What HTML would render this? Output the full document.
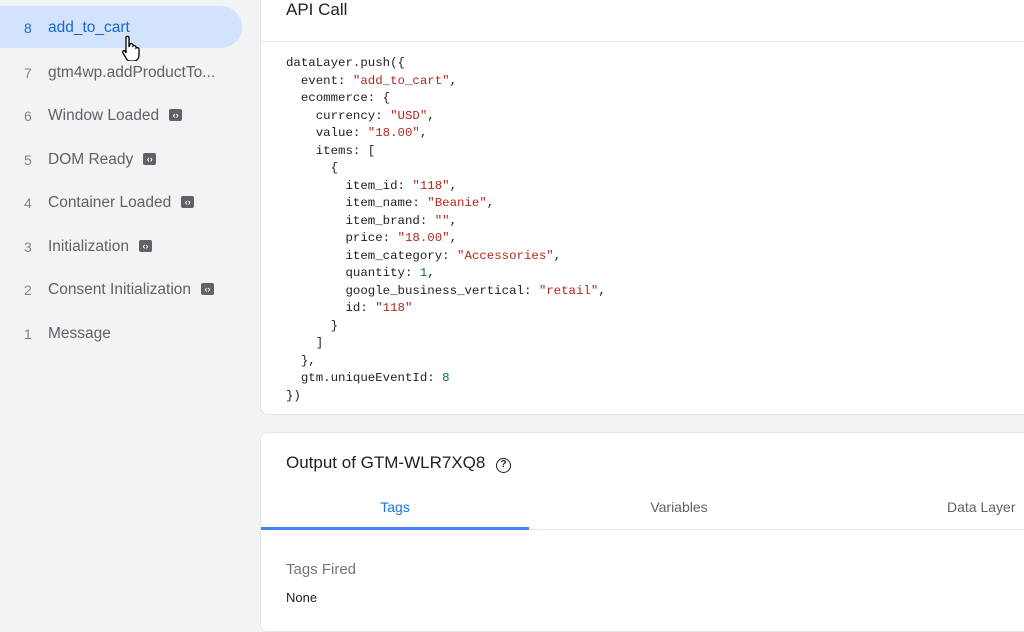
<!DOCTYPE html>
<html><head><meta charset="utf-8"><style>
*{margin:0;padding:0;box-sizing:border-box}
body{width:1024px;height:598px;overflow:hidden;background:#f1f3f4;font-family:"Liberation Sans",sans-serif;position:relative}
.side{position:absolute;left:0;top:0;width:258px;height:598px;background:#f1f3f4}
.item{position:absolute;left:0;height:42px;width:242px;font-size:15.5px;color:#5f6368;line-height:44px}
.item .n{position:absolute;left:24px;color:#80868b;font-size:14px}
.item .t{position:absolute;left:48px;white-space:nowrap}
.sel{background:#d3e3fd;border-radius:0 21px 21px 0}
.sel .n,.sel .t{color:#1967d2}
.b{display:inline-block;width:13px;height:12px;background:#5f6368;border-radius:2px;color:#fff;font-size:9px;line-height:12px;text-align:center;vertical-align:middle;margin-left:10px;position:relative;top:-1px;font-weight:bold}
.card{position:absolute;left:260px;width:780px;background:#fff;border-radius:8px;border:1px solid #e3e5e8}
.code{position:absolute;left:286px;top:55px;font-family:"Liberation Mono",monospace;font-size:12.4px;line-height:17.5px;color:#202124;white-space:pre}
.s{color:#b3261e}.num{color:#0b6e4f}
</style></head><body>
<div class="side">
<div class="item sel" style="top:6px"><span class="n">8</span><span class="t">add_to_cart</span></div>
<div class="item" style="top:51px"><span class="n">7</span><span class="t">gtm4wp.addProductTo...</span></div>
<div class="item" style="top:94px"><span class="n">6</span><span class="t">Window Loaded<span class="b">‹›</span></span></div>
<div class="item" style="top:138px"><span class="n">5</span><span class="t">DOM Ready<span class="b">‹›</span></span></div>
<div class="item" style="top:181px"><span class="n">4</span><span class="t">Container Loaded<span class="b">‹›</span></span></div>
<div class="item" style="top:225px"><span class="n">3</span><span class="t">Initialization<span class="b">‹›</span></span></div>
<div class="item" style="top:268px"><span class="n">2</span><span class="t">Consent Initialization<span class="b">‹›</span></span></div>
<div class="item" style="top:312px"><span class="n">1</span><span class="t">Message</span></div>
<svg style="position:absolute;left:121px;top:35px" width="20" height="26" viewBox="0 0 20 26"><path d="M5 2c1-1 3-1 3 1v9l1-3c1-1 3 0 3 1v1c1-1 3 0 3 1v1c1-1 3 0 3 1v6c0 3-2 6-5 6h-4c-2 0-3-1-4-3l-3-5c-1-1 0-3 2-2l1 2V3z" fill="#fff" stroke="#000" stroke-width="1.3"/></svg>
</div>
<div class="card" style="top:-10px;height:425px">
<div style="position:absolute;left:0;right:0;top:50px;border-top:1px solid #e3e5e8"></div>
<div style="position:absolute;left:25px;top:9px;font-size:17px;color:#202124">API Call</div>
</div>
<div class="code">dataLayer.push({
  event: <span class="s">"add_to_cart"</span>,
  ecommerce: {
    currency: <span class="s">"USD"</span>,
    value: <span class="s">"18.00"</span>,
    items: [
      {
        item_id: <span class="s">"118"</span>,
        item_name: <span class="s">"Beanie"</span>,
        item_brand: <span class="s">""</span>,
        price: <span class="s">"18.00"</span>,
        item_category: <span class="s">"Accessories"</span>,
        quantity: <span class="num">1</span>,
        google_business_vertical: <span class="s">"retail"</span>,
        id: <span class="s">"118"</span>
      }
    ]
  },
  gtm.uniqueEventId: <span class="num">8</span>
})</div>
<div class="card" style="top:432px;height:200px">
<div style="position:absolute;left:25px;top:20px;font-size:17px;color:#202124">Output of GTM-WLR7XQ8 <span style="display:inline-block;width:15px;height:15px;border:1.6px solid #202124;border-radius:50%;font-size:10px;text-align:center;line-height:12px;font-weight:bold;vertical-align:1px;margin-left:6px">?</span></div>
<div style="position:absolute;left:0;top:66px;width:268px;text-align:center;font-size:14px;color:#1a73e8">Tags</div>
<div style="position:absolute;left:268px;top:66px;width:300px;text-align:center;font-size:14px;color:#5f6368">Variables</div>
<div style="position:absolute;left:686px;top:66px;font-size:14px;color:#5f6368">Data Layer</div>
<div style="position:absolute;left:0;right:0;top:96px;border-top:1px solid #e3e5e8"></div>
<div style="position:absolute;left:0;top:94px;width:268px;height:3px;background:#4285f4"></div>
<div style="position:absolute;left:25px;top:128px;font-size:15px;color:#70757a">Tags Fired</div>
<div style="position:absolute;left:25px;top:157px;font-size:13px;color:#202124">None</div>
</div>
</body></html>
